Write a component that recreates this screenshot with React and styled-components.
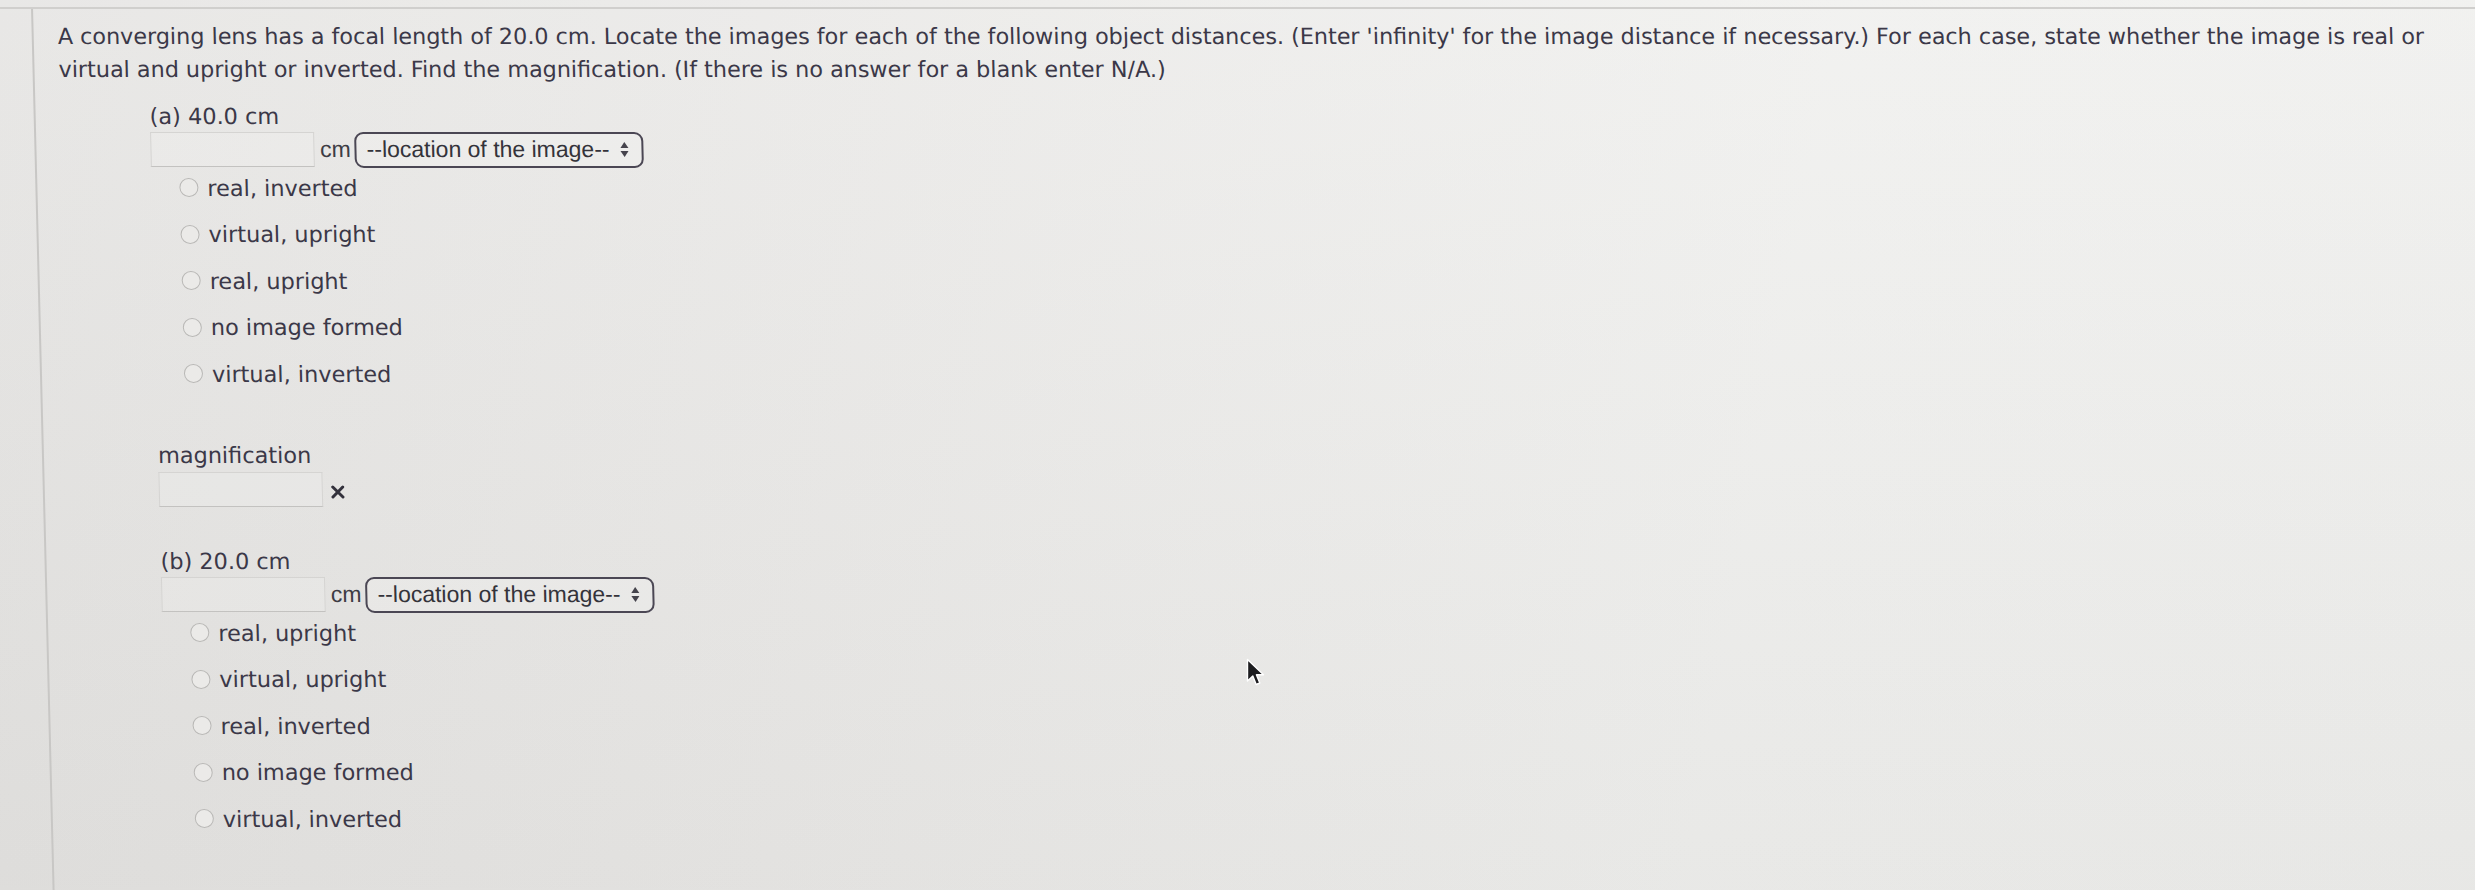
import { createGlobalStyle, styled } from "styled-components";

const GlobalStyle = createGlobalStyle`
  html, body {
    margin: 0;
    padding: 0;
  }
  body {
    height: 890px;
    overflow: hidden;
    font-family: "DejaVu Sans", Verdana, sans-serif;
    color: #3b3848;
    background:
      linear-gradient(to bottom, rgba(255, 255, 255, 0.22), rgba(0, 0, 0, 0.025)),
      linear-gradient(100deg, #e2e1df 0%, #e8e7e5 35%, #eeeeec 70%, #ededeb 100%);
  }
`;

const Frame = styled.div`
  display: flex;
  min-height: 960px;
  margin-top: 7px;
  border-top: 2px solid #d0cfcd;
  transform: skewX(1.4deg);
  transform-origin: 0 0;
`;

const Gutter = styled.div`
  flex: none;
  width: 31px;
  border-right: 2px solid #c8c7c5;
`;

const Content = styled.div`
  flex: 1;
  padding: 11px 24px 0 24px;
`;

const Question = styled.p`
  margin: 0;
  font-size: 22.3px;
  line-height: 33px;
  white-space: nowrap;
`;

const Parts = styled.div`
  display: flex;
  flex-direction: column;
  gap: 38.5px;
  margin: 14.5px 0 0 90px;
`;

const Part = styled.section`
  display: flex;
  flex-direction: column;
`;

const Label = styled.div`
  font-size: 22.4px;
  line-height: 30px;
  margin-top: ${(p) => p.$top || 0}px;
`;

const AnswerRow = styled.div`
  display: flex;
  align-items: center;
  height: ${(p) => p.$height || 36}px;
  margin-top: ${(p) => p.$top || 0}px;
`;

const TextBox = styled.div`
  box-sizing: border-box;
  width: 164px;
  height: 35px;
  border: 1px solid #d5d4d2;
  border-bottom-color: #c3c2c0;
  background: rgba(255, 255, 255, 0.14);
`;

const Unit = styled.span`
  font-family: "Liberation Sans", Arial, sans-serif;
  font-size: 23px;
  color: #3d3c44;
  margin: 0 4px 0 5.5px;
`;

const SelectBox = styled.div`
  box-sizing: border-box;
  width: 289px;
  height: 36px;
  display: flex;
  align-items: center;
  justify-content: space-between;
  padding: 0 12px 0 10px;
  border: 2px solid #4b4754;
  border-radius: 9px;
  background: rgba(255, 255, 255, 0.18);
  font-family: "Liberation Sans", Arial, sans-serif;
  font-size: 23px;
  color: #34333a;
`;

const RadioList = styled.div`
  display: flex;
  flex-direction: column;
  margin-top: -3px;
`;

const RadioRow = styled.label`
  display: flex;
  align-items: center;
  height: 46.5px;
  padding-left: 28px;
  font-size: 22.4px;
`;

const Radio = styled.span`
  box-sizing: border-box;
  flex: none;
  width: 19px;
  height: 19px;
  margin-right: 9px;
  border: 1.5px solid #b9b8b6;
  border-radius: 50%;
  background: #ebeae8;
`;

const Mark = styled.svg`
  margin-left: 7.5px;
  margin-top: 5px;
`;

const Pointer = styled.svg`
  position: absolute;
  left: 1246px;
  top: 658px;
`;

function Arrows() {
  return (
    <svg width="10" height="17" viewBox="0 0 10 17">
      <path d="M1 7 L5 1 L9 7 Z" fill="#45434c" />
      <path d="M1 10 L5 16 L9 10 Z" fill="#45434c" />
    </svg>
  );
}

const partA = ["real, inverted", "virtual, upright", "real, upright", "no image formed", "virtual, inverted"];
const partB = ["real, upright", "virtual, upright", "real, inverted", "no image formed", "virtual, inverted"];

function PartBlock({ name, distance, options, marked }) {
  return (
    <Part>
      <Label>
        ({name}) {distance}
      </Label>
      <AnswerRow $top={1}>
        <TextBox />
        <Unit>cm</Unit>
        <SelectBox>
          <span>--location of the image--</span>
          <Arrows />
        </SelectBox>
      </AnswerRow>
      <RadioList>
        {options.map((o) => (
          <RadioRow key={o}>
            <Radio />
            {o}
          </RadioRow>
        ))}
      </RadioList>
      <Label $top={43}>magnification</Label>
      <AnswerRow $top={2} $height={35}>
        <TextBox />
        {marked && (
          <Mark width="14" height="14" viewBox="0 0 14 14">
            <path d="M2 2 L12 12 M12 2 L2 12" stroke="#33323c" strokeWidth="3" strokeLinecap="round" />
          </Mark>
        )}
      </AnswerRow>
    </Part>
  );
}

export default function App() {
  return (
    <>
      <GlobalStyle />
      <Frame>
        <Gutter />
        <Content>
          <Question>
            A converging lens has a focal length of 20.0 cm. Locate the images for each of the following object
            distances. (Enter 'infinity' for the image distance if necessary.) For each case, state whether the image is
            real or
            <br />
            virtual and upright or inverted. Find the magnification. (If there is no answer for a blank enter N/A.)
          </Question>
          <Parts>
            <PartBlock name="a" distance="40.0 cm" options={partA} marked />
            <PartBlock name="b" distance="20.0 cm" options={partB} />
          </Parts>
        </Content>
      </Frame>
      <Pointer width="20" height="29" viewBox="0 0 20 29">
        <path
          d="M1.5 1.5 L1.5 23 L6.8 18 L10.2 26.5 L13.8 25 L10.4 16.8 L17.5 16.8 Z"
          fill="#1c1c1f"
          stroke="#ffffff"
          strokeWidth="1.4"
          strokeLinejoin="round"
        />
      </Pointer>
    </>
  );
}
